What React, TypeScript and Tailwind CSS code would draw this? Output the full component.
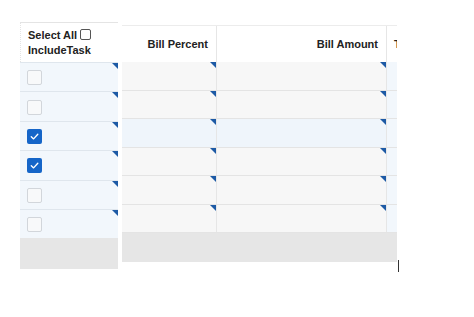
import * as React from 'react'

const checked = [false, false, true, true, false, false]

function Corner() {
  return (
    <svg className="absolute right-0 top-0" width="6" height="6" viewBox="0 0 6 6" aria-hidden="true">
      <polygon points="0,0 6,0 6,6" fill="#1d5aa5" />
    </svg>
  )
}

function Check({ on }: { on: boolean }) {
  if (on) {
    return (
      <span className="flex h-[15px] w-[15px] items-center justify-center rounded-[2px] bg-[#1565c8]">
        <svg width="11" height="11" viewBox="0 0 12 12" aria-hidden="true">
          <path d="M2.5 6.3 L5 8.6 L9.6 3.6" fill="none" stroke="#fff" strokeWidth="1.5" strokeLinecap="round" strokeLinejoin="round" />
        </svg>
      </span>
    )
  }
  return <span className="block h-[15px] w-[15px] rounded-[2px] border border-[#d2d6db] bg-[#f8f9fa]" />
}

export default function App() {
  return (
    <div className="h-[317px] w-[474px] bg-white font-['Liberation_Sans',Arial,sans-serif] text-[11px] text-[#222]">
      <div className="flex items-start gap-[4px] pl-[20px] pt-[22px]">
        {/* left frozen column */}
        <div className="w-[98px]">
          <div className="h-[40px] border-l border-t border-[#e4e4e4] bg-white pl-[7px] pt-[5px] font-bold leading-[15px] [border-left-style:dotted]">
            <div className="flex items-center">
              Select All
              <span className="mb-[2px] ml-[3px] block h-[11px] w-[11px] rounded-[2px] border border-[#555] bg-white" />
            </div>
            <div>IncludeTask</div>
          </div>
          {checked.map((on, i) => (
            <div key={i} className="relative flex h-[29.4px] items-center border-t border-[#dfe6ed] bg-[#f2f7fc] pl-[7px] pt-[1px]">
              <Check on={on} />
              <Corner />
            </div>
          ))}
          <div className="h-[31px] bg-[#e6e6e6]" />
        </div>

        {/* right scrolling grid */}
        <div className="relative mt-[3px] w-[275px]">
          <div className="overflow-hidden">
            <div className="flex h-[37px] w-[300px] border-t border-[#ececec] bg-white font-bold shadow-[0_2px_3px_rgba(0,0,0,0.08)]">
              <div className="flex w-[95px] items-center justify-end border-r border-[#e6e6e6] pr-[8px]">Bill Percent</div>
              <div className="flex w-[170px] items-center justify-end border-r border-[#e6e6e6] pr-[8px]">Bill Amount</div>
              <div className="flex flex-1 items-center pl-[7px]">T</div>
            </div>
            {checked.map((_, i) => (
              <div key={i} className={`flex h-[28.5px] w-[300px] border-b border-[#e4e4e4] ${i === 2 ? 'bg-[#eff5fb]' : 'bg-[#f7f7f7]'}`}>
                <div className="relative w-[95px] border-r border-[#e6e6e6]">
                  <Corner />
                </div>
                <div className="relative w-[170px] border-r border-[#e6e6e6]">
                  <Corner />
                </div>
                <div className="flex-1 bg-[#f2f7fc]" />
              </div>
            ))}
            <div className="h-[29px] bg-[#e6e6e6]" />
          </div>
          <span className="absolute left-[276px] top-[235px] h-[12px] w-[1px] bg-[#333]" />
        </div>
      </div>
    </div>
  )
}
